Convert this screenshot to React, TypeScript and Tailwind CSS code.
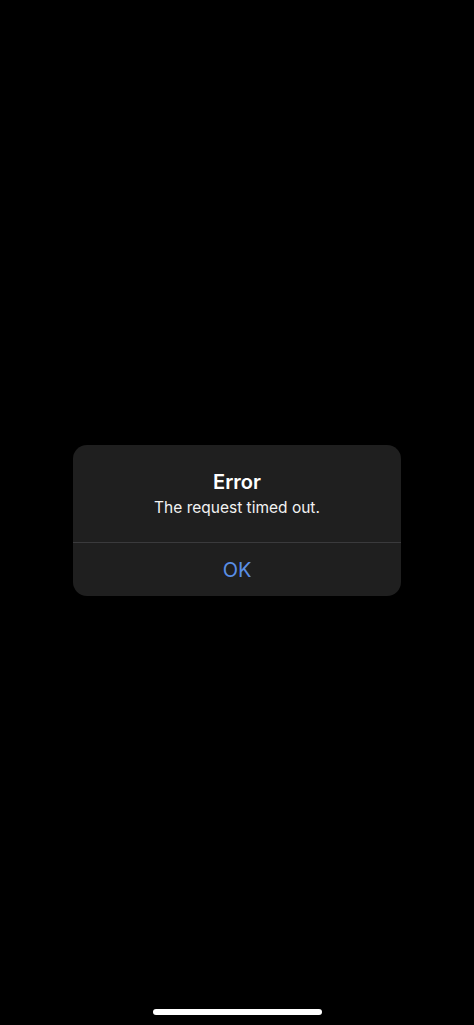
export default function App() {
  return (
    <div
      className="flex h-[1025px] w-full flex-col items-center bg-black"
      style={{ fontFamily: 'Inter, "Noto Sans", sans-serif' }}
    >
      <div className="h-[445px] shrink-0" />
      {/* Alert */}
      <div className="w-[328px] overflow-hidden rounded-[14px] bg-[#1f1f1f]">
        <div className="flex flex-col items-center px-4 pb-[24px] pt-[25px] text-white">
          <h2 className="text-[20px] font-semibold leading-[24px]">Error</h2>
          <p className="mt-[4px] text-[15.5px] leading-[20px] text-[#f2f2f2]">
            The request timed out.
          </p>
        </div>
        <div className="h-px bg-[#3a3a3c]" />
        <button className="flex h-[53px] w-full items-center justify-center text-[20px] text-[#5a8fe6]">
          OK
        </button>
      </div>
      <div className="flex-1" />
      {/* Home indicator */}
      <div className="mb-[10px] h-[6px] w-[169px] rounded-full bg-white" />
    </div>
  )
}
